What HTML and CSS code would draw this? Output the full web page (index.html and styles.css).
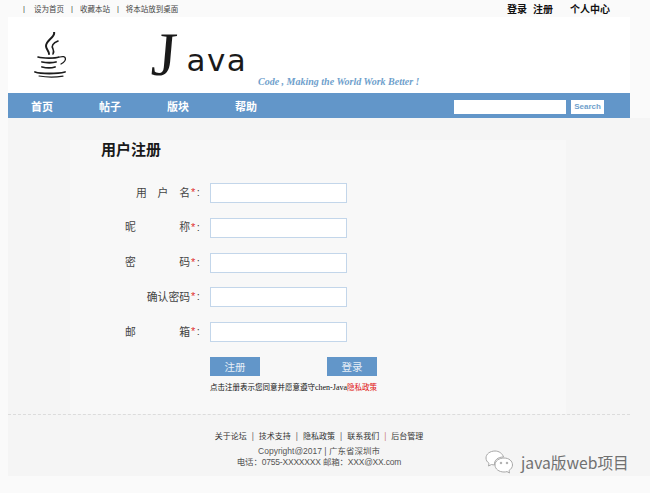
FILE: index.html
```html
<!DOCTYPE html>
<html lang="zh">
<head>
<meta charset="utf-8">
<title>用户注册</title>
<link rel="stylesheet" href="styles.css">
</head>
<body>
<div class="topbar">
  <div class="quick">
    <span class="sep first">|</span><a>设为首页</a>
    <span class="sep">|</span><a>收藏本站</a>
    <span class="sep">|</span><a>将本站放到桌面</a>
  </div>
  <div class="account">
    <a>登录</a><a class="reg">注册</a><a class="me">个人中心</a>
  </div>
</div>
<header class="brand">
  <svg class="cup" width="36" height="46" viewBox="0 0 36 46" fill="none" stroke="#1c1c1c" stroke-linecap="round">
    <path d="M20 0c2 5-8 8-8 14 0 3 3 5 3 8" stroke-width="2"/>
    <path d="M24 9c-5 2-7 5-5 8 1 2 1 3 0 5" stroke-width="1.600"/>
    <path d="M4 25c5 1.500 17 1.500 21 0" stroke-width="1.600"/>
    <path d="M8 30c4 1 11 1 14 0" stroke-width="1.800"/>
    <path d="M8 35c4 1 10 1 13 0" stroke-width="1.800"/>
    <path d="M26 25c6-2 8 3 1 7" stroke-width="1.300"/>
    <path d="M1 40c6 2 22 2 30 0" stroke-width="1.800"/>
    <path d="M5 44c7 1.200 17 1.200 24 .2" stroke-width="1.200"/>
  </svg>
  <div class="logo"><span class="logo-j">J</span><span class="logo-ava">ava</span></div>
  <div class="slogan">Code , Making the World Work Better !</div>
</header>
<nav class="nav">
  <ul class="menu">
    <li>首页</li>
    <li>帖子</li>
    <li>版块</li>
    <li>帮助</li>
  </ul>
  <form class="search">
    <input class="search-input" type="text" aria-label="搜索">
    <button class="search-btn" type="button">Search</button>
  </form>
</nav>
<main class="main">
  <section class="panel">
    <h1 class="title">用户注册</h1>
    <form class="form">
      <div class="row"><label class="label spread-3"><span>用</span><span>户</span><span>名</span></label><span class="req"><i>*</i>:</span><input class="field" type="text"></div>
      <div class="row"><label class="label spread-wide"><span>昵</span><span>称</span></label><span class="req"><i>*</i>:</span><input class="field" type="text"></div>
      <div class="row"><label class="label spread-wide"><span>密</span><span>码</span></label><span class="req"><i>*</i>:</span><input class="field" type="password"></div>
      <div class="row"><label class="label">确认密码</label><span class="req"><i>*</i>:</span><input class="field" type="password"></div>
      <div class="row"><label class="label spread-wide"><span>邮</span><span>箱</span></label><span class="req"><i>*</i>:</span><input class="field" type="text"></div>
      <div class="actions">
        <button class="btn" type="button">注册</button>
        <button class="btn" type="button">登录</button>
      </div>
      <p class="agree">点击注册表示您同意并愿意遵守<span class="serif">chen-Java</span><span class="policy">隐私政策</span></p>
    </form>
  </section>
  <footer class="footer">
    <div class="links">
      <a>关于论坛</a><span>|</span><a>技术支持</a><span>|</span><a>隐私政策</a><span>|</span><a>联系我们</a><span class="red">|</span><a>后台管理</a>
    </div>
    <p class="copy">Copyright@2017 | 广东省深圳市</p>
    <p class="copy tel">电话：0755-XXXXXXX 邮箱：XXX@XX.com</p>
  </footer>
</main>
<div class="watermark">
  <svg width="30" height="24" viewBox="0 0 30 24" fill="#fff" stroke="#a8a8a8" stroke-width="1">
    <path d="M10 1C5 1 1 4 1 8c0 2.200 1.200 4 3 5.300L3.500 16l3-1.500c1 .3 2 .4 3 .4C9 10 13 7 18.500 7 17.500 3.500 14 1 10 1z"/>
    <path d="M19 8c-5 0-9 3-9 7s4 7 9 7c1 0 2-.1 3-.4l2.500 1.400-.5-2.500c2-1.300 3.500-3.300 3.500-5.500 0-4-3.500-7-8.500-7z"/>
    <circle cx="16" cy="13" r=".8" fill="#a8a8a8"/>
    <circle cx="22" cy="13" r=".8" fill="#a8a8a8"/>
  </svg>
  <span>java版web项目</span>
</div>
</body>
</html>
```
FILE: styles.css
```css
* { box-sizing: border-box; }
html, body { margin: 0; padding: 0; }
body {
  width: 650px;
  height: 493px;
  overflow: hidden;
  position: relative;
  background: #fafafa;
  font-family: "Liberation Sans", "Noto Sans CJK SC", sans-serif;
  color: #333;
}
.topbar {
  height: 17px;
  padding: 0 40px 0 23px;
  display: flex;
  justify-content: space-between;
  align-items: center;
}
.quick { font-size: 7.5px; color: #444; display: flex; align-items: center; }
.quick .sep { margin-right: 7px; }
.quick .sep.first { margin-right: 9px; }
.quick a { margin-right: 7px; }
.account { font-size: 10px; font-weight: 700; color: #111; display: flex; }
.account .reg { margin-left: 6px; }
.account .me { margin-left: 17px; }
.brand {
  margin: 0 20px 0 8px;
  height: 76px;
  background: #fff;
  display: flex;
  position: relative;
}
.cup { margin: 15px 0 0 26px; flex: none; }
.logo {
  margin: 9px 0 0 79px;
  display: flex;
  align-items: baseline;
  height: 60px;
  color: #1a1a1a;
  font-family: "Liberation Serif", serif;
}
.logo-j {
  display: block;
  font-size: 62px;
  line-height: 56px;
  font-style: italic;
  transform: skewX(5deg);
}
.logo-ava {
  font-size: 31px;
  font-family: "DejaVu Sans", sans-serif;
  margin-left: 10px;
  letter-spacing: 1.500px;
  transform: translateY(-4px);
}
.slogan {
  position: absolute;
  left: 250px;
  top: 59px;
  font: italic 700 10px "Liberation Serif", serif;
  color: #6f9fcc;
}
.nav {
  margin: 0 20px 0 8px;
  height: 25px;
  background: #6296c9;
  display: flex;
  justify-content: space-between;
  align-items: center;
  padding: 0 26px 0 23px;
}
.menu {
  list-style: none;
  margin: 0;
  padding: 0;
  display: flex;
  gap: 46px;
  color: #fff;
  font: 700 11px "Noto Sans CJK SC", sans-serif;
}
.search { display: flex; gap: 5px; align-items: center; padding-top: 2px; }
.search-input {
  width: 112px;
  height: 14px;
  padding: 0;
  border: 0;
  background: #fff;
}
.search-btn {
  width: 33px;
  height: 14px;
  padding: 0;
  border: 0;
  background: #fff;
  color: #6f9fcc;
  font: 700 8px "Liberation Sans", sans-serif;
}
.main {
  height: 358px;
  margin-left: 8px;
  background: #f5f5f5;
  padding-top: 22px;
}
.panel {
  margin-left: 62px;
  width: 496px;
  height: 274px;
  background: #f8f8f8;
  padding: 0 0 0 31px;
}
.title {
  margin: 0;
  font: 700 15px/18px "Noto Sans CJK SC", sans-serif;
  color: #1a1a1a;
}
.form { margin-top: 25px; }
.row {
  display: flex;
  align-items: center;
  height: 20px;
  margin-bottom: 14.800px;
  font-size: 10px;
  color: #444;
}
.label {
  width: 68px;
  margin-left: 21px;
  padding-bottom: 3px;
  display: flex;
  justify-content: flex-end;
  font: 10.800px "Noto Sans CJK SC", sans-serif;
}
.spread-3 { justify-content: space-between; padding-left: 14px; }
.spread-wide { justify-content: space-between; padding-left: 3px; }
.req { width: 20px; padding-bottom: 2px; font-size: 11px; flex: none; padding-left: 1px; letter-spacing: 1.500px; }
.req i { color: #e03030; font-style: normal; }
.field {
  width: 137px;
  height: 20px;
  padding: 0;
  background: #fff;
  border: 1px solid #c3d6ea;
}
.actions {
  display: flex;
  gap: 67px;
  margin: -1px 0 0 109px;
  padding-top: 1px;
}
.btn {
  width: 50px;
  height: 19px;
  padding: 0;
  border: 0;
  background: #6296c9;
  color: #e6eef7;
  font: 400 10.500px "Noto Sans CJK SC", sans-serif;
}
.agree {
  margin: 5px 0 0 109px;
  font: 400 7.500px/11px "Noto Sans CJK SC", sans-serif;
  color: #111;
}
.serif { font-family: "Liberation Serif", serif; font-size: 8px; }
.policy { color: #e01010; }
.footer {
  border-top: 1px dashed #dcdcdc;
  padding-top: 15px;
  margin-right: 20px;
  text-align: center;
  color: #444;
}
.links {
  font: 8px/12px "Noto Sans CJK SC", sans-serif;
  display: flex;
  justify-content: center;
  gap: 5px;
  color: #333;
}
.links .red { color: #b55; }
.copy {
  margin: 0;
  font: 8.500px/11px "Liberation Sans", "Noto Sans CJK SC", sans-serif;
  color: #555;
}
.links + .copy { margin-top: 4px; }
.tel { letter-spacing: -.2px; }
.watermark {
  position: absolute;
  left: 485px;
  top: 450px;
  display: flex;
  align-items: center;
  gap: 6px;
  font: 15.700px "Noto Sans CJK SC", sans-serif;
  color: #707070;
}
```
